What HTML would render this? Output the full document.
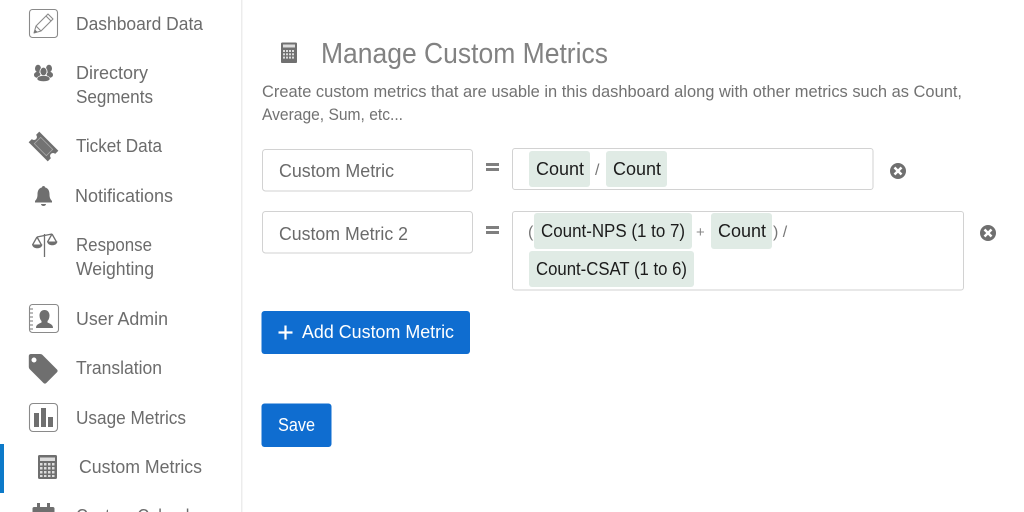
<!DOCTYPE html>
<html><head><meta charset="utf-8"><style>
html,body{margin:0;padding:0;background:#fff;width:1024px;height:512px;overflow:hidden}
svg{display:block;filter:blur(.35px)}
text{font-family:"Liberation Sans",sans-serif}
.n{font-size:18.500px;fill:#6c6c6c}
.c{font-size:18px;fill:#1c1c1c}
</style></head><body>
<svg width="1024" height="512" viewBox="0 0 1024 512" xmlns="http://www.w3.org/2000/svg">
<rect x="241" y="0" width="1.500" height="512" fill="#ececec"/>
<rect x="0" y="444" width="4" height="49" fill="#0d7ac9"/>
<g>
<text class="n" x="76" y="30" textLength="127" lengthAdjust="spacingAndGlyphs">Dashboard Data</text>
<text class="n" x="76" y="79" textLength="72" lengthAdjust="spacingAndGlyphs">Directory</text>
<text class="n" x="76" y="103" textLength="77" lengthAdjust="spacingAndGlyphs">Segments</text>
<text class="n" x="76" y="152" textLength="86" lengthAdjust="spacingAndGlyphs">Ticket Data</text>
<text class="n" x="75" y="202" textLength="98" lengthAdjust="spacingAndGlyphs">Notifications</text>
<text class="n" x="76" y="251" textLength="76" lengthAdjust="spacingAndGlyphs">Response</text>
<text class="n" x="76" y="275" textLength="78" lengthAdjust="spacingAndGlyphs">Weighting</text>
<text class="n" x="76" y="325" textLength="92" lengthAdjust="spacingAndGlyphs">User Admin</text>
<text class="n" x="76" y="374" textLength="86" lengthAdjust="spacingAndGlyphs">Translation</text>
<text class="n" x="76" y="424" textLength="110" lengthAdjust="spacingAndGlyphs">Usage Metrics</text>
<text class="n" x="79" y="473" textLength="123" lengthAdjust="spacingAndGlyphs">Custom Metrics</text>
<text class="n" x="76" y="522" textLength="128" lengthAdjust="spacingAndGlyphs">Custom Calendar</text>
</g>
<!-- pencil -->
<rect x="29.500" y="9.500" width="28" height="28" rx="3" fill="none" stroke="#8a8a8a" stroke-width="1.100"/>
<path d="M34 33l2-7L48 14l5 5-12 12zM36 26l5 5M46 16l5 5" fill="none" stroke="#8a8a8a" stroke-width="1.100" stroke-linejoin="round"/>
<path d="M34 33l1-3.500 2.500 2.500z" fill="#777"/>
<!-- users -->
<g fill="#6f6f6f"><ellipse cx="38" cy="68.500" rx="3" ry="3.800"/><ellipse cx="49" cy="68.500" rx="3" ry="3.800"/>
<path d="M34 75c0-2 1.500-3 4-3.500l3 2-2.500 4.500c-2.500 0-4.500-1.200-4.500-3zM53 75c0-2-1.500-3-4-3.500l-3 2 2.500 4.500c2.500 0 4.500-1.200 4.500-3z"/>
<ellipse cx="43.500" cy="71.500" rx="3.500" ry="4.300" stroke="#fff" stroke-width=".8"/>
<path d="M37 79c0-2.500 3.500-3.600 6.500-3.600s6.500 1.100 6.500 3.600c0 1.500-3 2.600-6.500 2.600S37 80.500 37 79z" stroke="#fff" stroke-width=".6"/></g>
<!-- ticket -->
<g transform="translate(43.500 146.500) rotate(45)">
<path d="M-13.500-7.500H13.500V-3a3 3 0 000 6V7.500H-13.500V3a3 3 0 000-6z" fill="#6f6f6f"/>
<rect x="-8.500" y="-4.500" width="17" height="9" fill="#737373" stroke="#a8a8a8" stroke-width=".8"/>
</g>
<!-- bell -->
<path d="M43.500 186c1 0 1.500.6 1.500 1.400 3.300.8 4.500 3.600 4.500 7 0 3.500 1 5 2.500 6.600v1.500H35V201c1.500-1.600 2.500-3.100 2.500-6.600 0-3.400 1.200-6.200 4.500-7 0-.8.500-1.400 1.500-1.400zM41 204h5c0 1-1 2-2.500 2s-2.500-1-2.500-2z" fill="#6f6f6f"/>
<!-- scales -->
<g fill="none" stroke="#6f6f6f" stroke-width="1.300"><path d="M44.500 234v23M37 237l15-3M37 237l-4.500 8M37 237l4.500 8M52 234l-4.500 8M52 234l4.500 8"/></g>
<path d="M32 244.500h10.500c-.5 2.500-2.500 3.800-5.200 3.800s-4.800-1.300-5.300-3.800zM47 241.500h10.500c-.5 2.500-2.500 3.800-5.200 3.800s-4.800-1.300-5.300-3.800z" fill="#6f6f6f"/>
<!-- user admin -->
<rect x="29.500" y="304.500" width="29" height="28" rx="3" fill="none" stroke="#8a8a8a" stroke-width="1.100"/>
<path d="M30 309h3M30 313h3M30 317h3M30 321h3M30 325h3M30 329h3" stroke="#777" stroke-width="1.100"/>
<path d="M44.500 310c3 0 5 2.300 5 5.500 0 2.500-1 4.500-2 5.500v1.500c2 1.200 5.500 1.500 5.500 5.500H36c0-4 3.500-4.300 5.500-5.500V321c-1-1-2-3-2-5.500 0-3.200 2-5.500 5-5.500z" fill="#6f6f6f"/>
<!-- tag -->
<path d="M31 354h9c1 0 2 .4 2.800 1.200L57 369.500c.8.800.8 2 0 2.800l-10.700 10.700c-.8.800-2 .8-2.800 0L30 369.500c-.8-.8-1.200-1.800-1.200-2.800V356c0-1.200 1-2 2.200-2zm3 3.500a2.500 2.500 0 100 5 2.500 2.500 0 000-5z" fill="#6f6f6f" fill-rule="evenodd"/>
<!-- usage -->
<rect x="29.500" y="403.500" width="28" height="28" rx="3.500" fill="none" stroke="#8a8a8a" stroke-width="1.100"/>
<path d="M34 413h5v14h-5zM41 408h5v19h-5zM48 417h5v10h-5z" fill="#6f6f6f"/>
<!-- side calculator -->
<rect x="38" y="455" width="19" height="24" rx="1.500" fill="#6f6f6f"/>
<rect x="40" y="457.500" width="15" height="3.500" fill="#ddd"/>
<g fill="#ddd"><rect x="40" y="463" width="2.500" height="2.500"/><rect x="44" y="463" width="2.500" height="2.500"/><rect x="48" y="463" width="2.500" height="2.500"/><rect x="52" y="463" width="2.500" height="2.500"/>
<rect x="40" y="467" width="2.500" height="2.500"/><rect x="44" y="467" width="2.500" height="2.500"/><rect x="48" y="467" width="2.500" height="2.500"/><rect x="52" y="467" width="2.500" height="2.500"/>
<rect x="40" y="471" width="2.500" height="2.500"/><rect x="44" y="471" width="2.500" height="2.500"/><rect x="48" y="471" width="2.500" height="2.500"/><rect x="52" y="471" width="2.500" height="2.500"/>
<rect x="40" y="475" width="2.500" height="2"/><rect x="44" y="475" width="2.500" height="2"/><rect x="48" y="475" width="2.500" height="2"/><rect x="52" y="475" width="2.500" height="2"/></g>
<!-- calendar -->
<path d="M34 507h3v-4h3v4h7v-4h3v4h3c.8 0 1.500.7 1.500 1.500V512H32.500v-3.500c0-.8.700-1.500 1.500-1.500z" fill="#6f6f6f"/>
<!-- title calc -->
<rect x="281" y="42.500" width="16" height="20.500" rx="1.300" fill="#707070"/>
<rect x="283" y="44.500" width="12" height="3" fill="#ddd"/>
<g fill="#ddd"><rect x="283" y="50" width="2" height="2"/><rect x="286" y="50" width="2" height="2"/><rect x="289" y="50" width="2" height="2"/><rect x="292" y="50" width="2" height="2"/>
<rect x="283" y="53.300" width="2" height="2"/><rect x="286" y="53.300" width="2" height="2"/><rect x="289" y="53.300" width="2" height="2"/><rect x="292" y="53.300" width="2" height="2"/>
<rect x="283" y="56.600" width="2" height="2"/><rect x="286" y="56.600" width="2" height="2"/><rect x="289" y="56.600" width="2" height="2"/><rect x="292" y="56.600" width="2" height="2"/></g>
<text x="321" y="63" font-size="28.500" fill="#828282" textLength="287" lengthAdjust="spacingAndGlyphs">Manage Custom Metrics</text>
<text x="262" y="97" font-size="17" fill="#727272" textLength="700" lengthAdjust="spacingAndGlyphs">Create custom metrics that are usable in this dashboard along with other metrics such as Count,</text>
<text x="262" y="120" font-size="17" fill="#727272" textLength="141" lengthAdjust="spacingAndGlyphs">Average, Sum, etc...</text>
<!-- row 1 -->
<rect x="262.500" y="149.500" width="210" height="41.500" rx="3" fill="#fff" stroke="#d2d2d2"/>
<text x="279" y="177" font-size="18" fill="#6a6a6a" textLength="115" lengthAdjust="spacingAndGlyphs">Custom Metric</text>
<path d="M486 163h13v3h-13zM486 168h13v3h-13z" fill="#7f7f7f"/>
<rect x="512.500" y="148.500" width="360.500" height="41" rx="2.500" fill="#fff" stroke="#d2d2d2"/>
<rect x="529" y="151" width="61" height="36" rx="3" fill="#e0ebe5"/>
<rect x="606" y="151" width="61" height="36" rx="3" fill="#e0ebe5"/>
<text class="c" x="536" y="175" textLength="48" lengthAdjust="spacingAndGlyphs">Count</text>
<text x="595" y="175" font-size="16" fill="#777">/</text>
<text class="c" x="613" y="175" textLength="48" lengthAdjust="spacingAndGlyphs">Count</text>
<circle cx="898" cy="171" r="8" fill="#6f6f6f"/>
<path d="M894.500 167.500l7 7M901.500 167.500l-7 7" stroke="#fff" stroke-width="2.500"/>
<!-- row 2 -->
<rect x="262.500" y="211.500" width="210" height="41.500" rx="3" fill="#fff" stroke="#d2d2d2"/>
<text x="279" y="240" font-size="18" fill="#6a6a6a" textLength="129" lengthAdjust="spacingAndGlyphs">Custom Metric 2</text>
<path d="M486 226h13v3h-13zM486 231h13v3h-13z" fill="#7f7f7f"/>
<rect x="512.500" y="211.500" width="451" height="78.500" rx="2.500" fill="#fff" stroke="#d2d2d2"/>
<text x="528" y="237" font-size="16" fill="#777">(</text>
<rect x="534" y="213" width="158" height="36" rx="3" fill="#e0ebe5"/>
<text class="c" x="541" y="237" textLength="144" lengthAdjust="spacingAndGlyphs">Count-NPS (1 to 7)</text>
<text x="696" y="237" font-size="15" fill="#888">+</text>
<rect x="711" y="213" width="61" height="36" rx="3" fill="#e0ebe5"/>
<text class="c" x="718" y="237" textLength="48" lengthAdjust="spacingAndGlyphs">Count</text>
<text x="773" y="237" font-size="16" fill="#777">) /</text>
<rect x="529" y="251" width="165" height="36" rx="3" fill="#e0ebe5"/>
<text class="c" x="536" y="275" textLength="151" lengthAdjust="spacingAndGlyphs">Count-CSAT (1 to 6)</text>
<circle cx="988" cy="233" r="8" fill="#6f6f6f"/>
<path d="M984.500 229.500l7 7M991.500 229.500l-7 7" stroke="#fff" stroke-width="2.500"/>
<!-- buttons -->
<rect x="261.500" y="311" width="208.500" height="43" rx="3" fill="#0f6dd0"/>
<path d="M285.500 325.500v14M278.500 332.500h14" stroke="#fff" stroke-width="2.200"/>
<text x="302" y="338" font-size="18" fill="#fff" textLength="152" lengthAdjust="spacingAndGlyphs">Add Custom Metric</text>
<rect x="261.500" y="403.500" width="70" height="43.500" rx="3" fill="#0f6dd0"/>
<text x="278" y="431" font-size="18" fill="#fff" textLength="37" lengthAdjust="spacingAndGlyphs">Save</text>
</svg>
</body></html>
